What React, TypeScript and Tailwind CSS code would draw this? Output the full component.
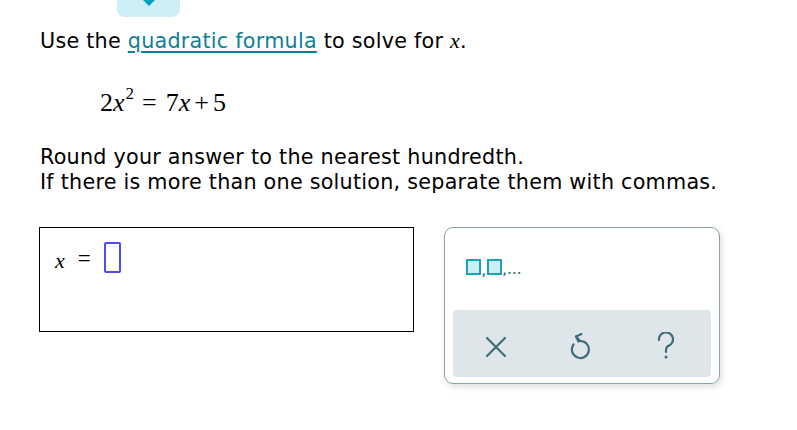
export default function App() {
  return (
    <div className="relative w-[797px] h-[430px] bg-white text-black" style={{ fontFamily: '"DejaVu Sans", Verdana, sans-serif' }}>
      <div className="absolute left-[117px] top-0 w-[63px] h-[17px] rounded-b-[8px] bg-[#cdeef4] flex justify-center">
        <svg width="16" height="7" viewBox="0 0 16 7">
          <path d="M2 0 L8 6 L14 0 Z" fill="#00a3bf" />
        </svg>
      </div>

      <div className="pt-[28px] pl-[40px]">
        <p className="text-[20.7px] leading-[26px] tracking-[0.25px]">
          Use the{' '}
          <span className="text-[#0f7f96] underline decoration-[#0f7f96] underline-offset-[3px]">quadratic formula</span>{' '}
          to solve for <span className="italic text-[22px]" style={{ fontFamily: '"Liberation Serif", serif' }}>x</span>.
        </p>

        <div
          className="mt-[32px] ml-[60px] text-[26px] leading-[34px]"
          style={{ fontFamily: '"Liberation Serif", "Times New Roman", serif' }}
        >
          2<span className="italic">x</span>
          <sup className="text-[17px] relative top-[-12px] ml-[1px]">2</sup>
          <span className="ml-[8px] mr-[9px]">=</span>7<span className="italic">x</span>
          <span className="mx-[4px]">+</span>5
        </div>

        <div className="mt-[25px] text-[20.7px] leading-[25px] tracking-[0.25px]">
          <p>Round your answer to the nearest hundredth.</p>
          <p>If there is more than one solution, separate them with commas.</p>
        </div>
      </div>

      <div className="mt-[32px] ml-[39px] flex items-start gap-[30px]">
        <div className="w-[375px] h-[105px] border border-black pl-[15px] pt-[14px]" style={{ fontFamily: '"Liberation Serif", serif' }}>
          <div className="flex items-center gap-[13px] h-[31px]">
            <span className="italic text-[22px] leading-none mt-[6px]">x</span>
            <span className="text-[23px] leading-none mt-[2px]">=</span>
            <span className="w-[17px] h-[31px] border-2 border-[#4b4bff] rounded-[2px]" />
          </div>
        </div>

        <div className="w-[276px] h-[157px] border border-[#8aa3a8] rounded-[9px] shadow-[2px_3px_6px_rgba(0,0,0,0.12)] px-[8px] pt-[27px]">
          <div className="flex items-end pl-[13px] h-[20px]">
            <span className="w-[15px] h-[16px] border-2 border-[#1aa2bb] bg-[#cdeef4]" />
            <span className="text-[10px] text-[#3d6b78] leading-none -mb-[2px] mx-[1px] font-bold">,</span>
            <span className="w-[15px] h-[16px] border-2 border-[#1aa2bb] bg-[#cdeef4]" />
            <span className="text-[10px] text-[#3d6b78] leading-none -mb-[1px] ml-[1px] font-bold tracking-[1px]">,...</span>
          </div>

          <div className="mt-[35px] h-[67px] rounded-[4px] bg-[#dfe6e9] grid grid-cols-3 items-center justify-items-center px-[2px]">
            <svg width="22" height="22" viewBox="0 0 22 22" className="mt-[6px] -ml-[2px]">
              <path d="M2 2 L20 20 M20 2 L2 20" stroke="#3f6d7a" strokeWidth="2.2" strokeLinecap="round" fill="none" />
            </svg>
            <svg width="24" height="28" viewBox="0 0 24 28" className="mt-[4px] -ml-[2px]">
              <path d="M11 9 A8.5 8.5 0 1 1 4.5 12.5" stroke="#3f6d7a" strokeWidth="2.2" strokeLinecap="round" fill="none" />
              <path d="M11 9 L7 4.5" stroke="#3f6d7a" strokeWidth="2.2" strokeLinecap="round" fill="none" />
              <path d="M12.5 2 L7 4.5 L9.5 9.5" stroke="#3f6d7a" strokeWidth="2.2" strokeLinecap="round" strokeLinejoin="round" fill="none" />
            </svg>
            <svg width="20" height="28" viewBox="0 0 20 28" className="mt-[4px] -ml-[2px]">
              <path d="M3 8 A7 7 0 1 1 12 14 C10.5 15 10 16 10 18 L10 20" stroke="#3f6d7a" strokeWidth="2.2" strokeLinecap="round" fill="none" />
              <circle cx="10" cy="25" r="1.5" fill="#3f6d7a" />
            </svg>
          </div>
        </div>
      </div>
    </div>
  )
}
